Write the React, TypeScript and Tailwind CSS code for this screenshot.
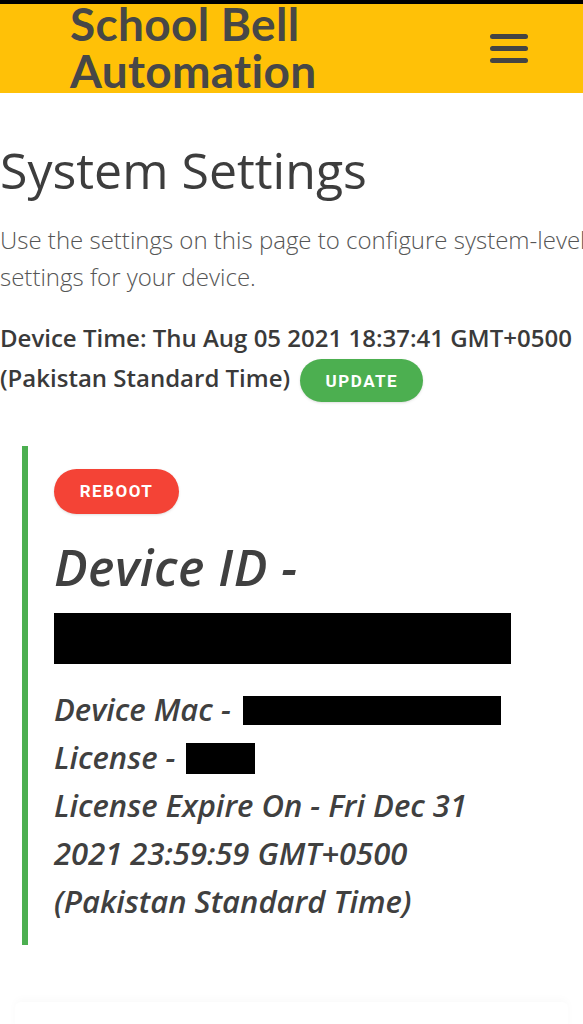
import React from 'react';

function Hamburger() {
  return (
    <div className="flex flex-col gap-[7px] w-[38px]">
      <span className="h-[5px] rounded-full bg-[#444]" />
      <span className="h-[5px] rounded-full bg-[#444]" />
      <span className="h-[5px] rounded-full bg-[#444]" />
    </div>
  );
}

function Redacted({ className }: { className: string }) {
  return <span className={`inline-block bg-black align-middle ${className}`} />;
}

export default function App() {
  return (
    <div className="min-h-[1024px] bg-white overflow-hidden font-['Open_Sans',sans-serif] text-[#3a3a3a]">
      <div className="h-1 bg-black" />
      <header className="bg-[#ffc107] h-[89px] flex items-center justify-between pl-[70px] pr-[55px]">
        <div className="font-['Lato',sans-serif] font-bold text-[46px] leading-[47px] tracking-[0.3px] text-[#474747] -mt-[3px]">
          School Bell
          <br />
          Automation
        </div>
        <Hamburger />
      </header>

      <main className="pt-[47px]">
        <h1 className="text-[50px] leading-[60px] font-normal text-[#3d3d3d]">System Settings</h1>

        <p className="w-[620px] mt-[21px] text-[24px] leading-[37px] font-light text-[#555]">
          Use the settings on this page to configure system-level settings for your device.
        </p>

        <div className="mt-[23px] text-[24px] leading-[40px] font-semibold text-[#3a3a3a]">
          Device Time: Thu Aug 05 2021 18:37:41 GMT+0500
          <br />
          (Pakistan Standard Time){' '}
          <button className="ml-[4px] -my-[4px] inline-flex items-center justify-center h-[43px] w-[123px] rounded-full bg-[#4caf50] text-white font-['Roboto',sans-serif] font-bold text-[17px] tracking-[1.5px] align-middle shadow-sm">
            UPDATE
          </button>
        </div>

        <section className="mt-[48px] ml-[22px] border-l-[6px] border-[#4caf50] pl-[26px] pr-[50px] pt-[23px] pb-[20px]">
          <button className="inline-flex items-center justify-center h-[45px] w-[125px] rounded-full bg-[#f44336] text-white font-['Roboto',sans-serif] font-bold text-[17px] tracking-[1.5px] shadow-sm">
            REBOOT
          </button>

          <h2 className="mt-[23px] text-[50px] leading-[60px] italic font-semibold tracking-[0.5px] text-[#404040]">Device ID -</h2>
          <div className="mt-[16px] h-[51px] w-[457px] bg-black" />

          <div className="mt-[21px] text-[31px] leading-[48px] italic font-semibold text-[#404040]">
            <div>
              Device Mac - <Redacted className="ml-[4px] w-[258px] h-[29px] -mt-[4px]" />
            </div>
            <div>
              License - <Redacted className="ml-[2px] w-[69px] h-[31px] -mt-[4px]" />
            </div>
            <div>License Expire On - Fri Dec 31 2021 23:59:59 GMT+0500 (Pakistan Standard Time)</div>
          </div>
        </section>

        <div className="mt-[57px] mx-[15px] h-[30px] rounded-t-md bg-white shadow-[0_-3px_8px_rgba(0,0,0,0.025)]" />
      </main>
    </div>
  );
}
